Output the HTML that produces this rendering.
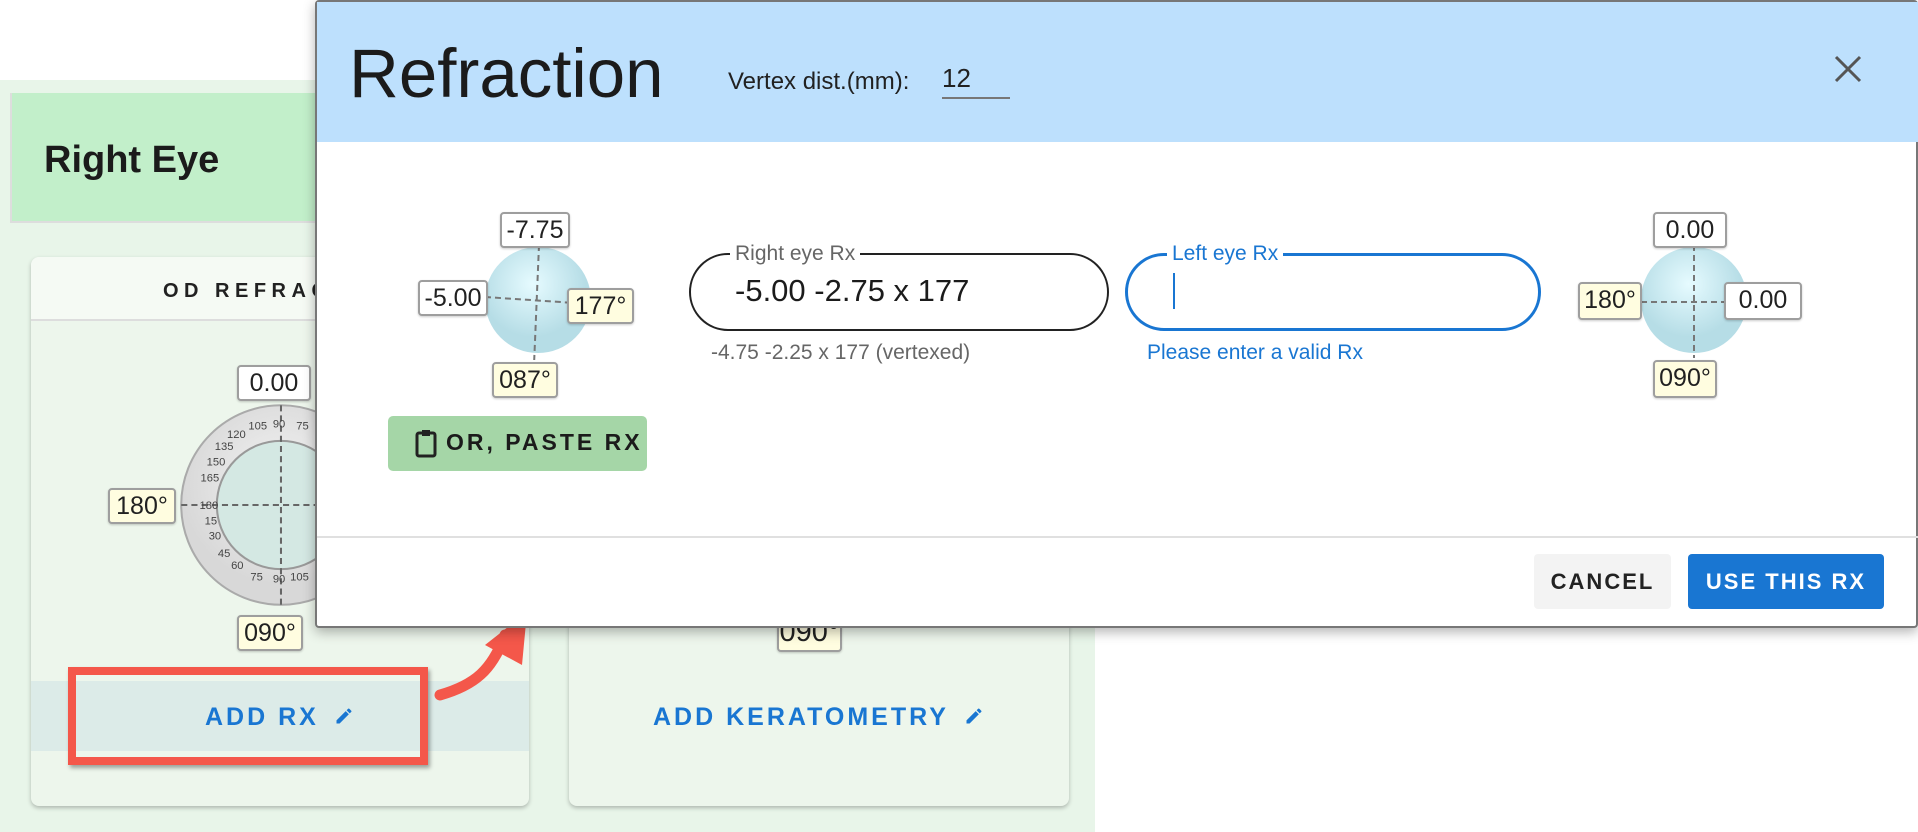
<!DOCTYPE html>
<html><head><meta charset="utf-8"><style>
*{box-sizing:border-box;margin:0;padding:0}
body{width:1918px;height:832px;position:relative;overflow:hidden;background:#fff;font-family:"Liberation Sans",sans-serif;color:#212121}
.a{position:absolute}
.lbl{position:absolute;border:2px solid #9e9e9e;border-radius:4px;background:#fff;font-size:25px;line-height:32px;text-align:center;color:#212121;box-shadow:0 1px 2px rgba(0,0,0,.2)}
.y{background:#fffde0}
.blue{color:#1976d2}
</style></head><body>
<div class="a" style="left:0;top:80px;width:1095px;height:752px;background:#e8f5e9"></div>
<div class="a" style="left:10px;top:93px;width:320px;height:130px;background:#c2efca;border-left:2px solid #ddd;border-bottom:2px solid #ddd"></div>
<div class="a" style="left:44px;top:139px;font-size:38px;font-weight:bold;color:#1b1b1b">Right Eye</div>

<div class="a" style="left:31px;top:257px;width:498px;height:549px;background:#edf6ec;border-radius:8px;box-shadow:0 2px 4px rgba(0,0,0,.25)"></div>
<div class="a" style="left:31px;top:257px;width:498px;height:64px;background:#f5faf4;border-bottom:2px solid #ddd;border-radius:8px 8px 0 0"></div>
<div class="a" style="left:163px;top:280px;font-size:20px;font-weight:bold;letter-spacing:5.5px">OD REFRACTION</div>
<div class="a" style="left:31px;top:681px;width:498px;height:70px;background:#dcebe8"></div>

<svg class="a" style="left:170px;top:393px" width="224" height="224" viewBox="0 0 220 220">
<defs><radialGradient id="rg" cx="50%" cy="40%"><stop offset="0" stop-color="#f4f4f4"/><stop offset="1" stop-color="#d8d8d8"/></radialGradient></defs>
<circle cx="109" cy="110" r="98" fill="url(#rg)" stroke="#aaa" stroke-width="2"/>
<circle cx="109" cy="110" r="63" fill="#d4e8e3" stroke="#999" stroke-width="2"/>
<g stroke="#666" stroke-width="2" stroke-dasharray="6 4"><line x1="11" y1="110" x2="207" y2="110"/><line x1="109" y1="12" x2="109" y2="208"/></g>
<g font-size="11" fill="#444" font-family="Liberation Sans">
<text x="101" y="34">90</text><text x="77" y="36">105</text><text x="56" y="44">120</text><text x="44" y="56">135</text><text x="36" y="71">150</text><text x="30" y="87">165</text><text x="29" y="114">180</text><text x="34" y="129">15</text><text x="38" y="144">30</text><text x="47" y="161">45</text><text x="60" y="173">60</text><text x="79" y="184">75</text><text x="101" y="186">90</text><text x="118" y="184">105</text><text x="124" y="36">75</text></g>
</svg>
<div class="lbl" style="left:237px;top:365px;width:74px;height:36px">0.00</div>
<div class="lbl y" style="left:108px;top:488px;width:68px;height:36px">180°</div>
<div class="lbl y" style="left:237px;top:615px;width:66px;height:36px">090°</div>

<div class="a" style="left:569px;top:540px;width:500px;height:266px;background:#edf6ec;border-radius:8px;box-shadow:0 2px 4px rgba(0,0,0,.25)"></div>
<div class="lbl y" style="left:777px;top:612px;width:65px;height:40px;font-size:29px;line-height:36px">090°</div>
<div class="a blue" style="left:653px;top:703px;font-size:25px;font-weight:bold;letter-spacing:3px">ADD KERATOMETRY</div>
<svg class="a" style="left:964px;top:706px" width="20" height="20" viewBox="0 0 24 24"><path fill="#1976d2" d="M3 17.25V21h3.75L17.81 9.94l-3.75-3.75L3 17.25zM20.71 7.04a1 1 0 000-1.41l-2.34-2.34a1 1 0 00-1.41 0l-1.83 1.83 3.75 3.75 1.83-1.83z"/></svg>

<div class="a blue" style="left:205px;top:703px;font-size:25px;font-weight:bold;letter-spacing:3px">ADD RX</div>
<svg class="a" style="left:334px;top:706px" width="20" height="20" viewBox="0 0 24 24"><path fill="#1976d2" d="M3 17.25V21h3.75L17.81 9.94l-3.75-3.75L3 17.25zM20.71 7.04a1 1 0 000-1.41l-2.34-2.34a1 1 0 00-1.41 0l-1.83 1.83 3.75 3.75 1.83-1.83z"/></svg>
<div class="a" style="left:68px;top:667px;width:360px;height:98px;border:8px solid #f4574a;box-shadow:2px 3px 4px rgba(0,0,0,.35)"></div>
<svg class="a" style="left:430px;top:600px" width="110" height="110" viewBox="0 0 110 110"><path d="M10 95 C45 85 62 70 75 35" fill="none" stroke="#f4574a" stroke-width="11" stroke-linecap="round"/><path d="M55 45 L97 12 L92 65 Z" fill="#f4574a"/></svg>

<div class="a" style="left:315px;top:0;width:1603px;height:628px;background:#fff;border:2px solid #777;border-radius:4px;box-shadow:0 4px 12px rgba(0,0,0,.3)"></div>
<div class="a" style="left:317px;top:2px;width:1601px;height:140px;background:#bde0fd"></div>
<div class="a" style="left:349px;top:34px;font-size:69px;color:#1b1b1b">Refraction</div>
<div class="a" style="left:728px;top:68px;font-size:24px">Vertex dist.(mm):</div>
<div class="a" style="left:942px;top:63px;font-size:26px">12</div>
<div class="a" style="left:942px;top:97px;width:68px;height:2px;background:#777"></div>
<svg class="a" style="left:1833px;top:54px" width="30" height="30" viewBox="0 0 30 30"><path d="M3 3L27 27M27 3L3 27" stroke="#555" stroke-width="3"/></svg>

<svg class="a" style="left:480px;top:240px" width="120" height="120"><defs><radialGradient id="lg" cx="45%" cy="35%"><stop offset="0" stop-color="#e6fbff"/><stop offset="1" stop-color="#b6dde6"/></radialGradient></defs><circle cx="58" cy="60" r="53" fill="url(#lg)"/><g stroke="#777" stroke-width="2" stroke-dasharray="6 4"><line x1="59" y1="5" x2="54" y2="125"/><line x1="5" y1="57" x2="110" y2="64"/></g></svg>
<div class="lbl" style="left:500px;top:212px;width:70px;height:36px">-7.75</div>
<div class="lbl" style="left:418px;top:280px;width:70px;height:36px">-5.00</div>
<div class="lbl y" style="left:567px;top:288px;width:67px;height:36px">177°</div>
<div class="lbl y" style="left:492px;top:362px;width:66px;height:36px">087°</div>

<div class="a" style="left:388px;top:416px;width:259px;height:55px;background:#a5d6a7;border-radius:5px"></div>
<svg class="a" style="left:414px;top:428px" width="24" height="30" viewBox="0 0 24 30"><rect x="3" y="5" width="18" height="23" rx="2" fill="none" stroke="#222" stroke-width="3"/><rect x="8" y="2" width="8" height="6" fill="#222"/></svg>
<div class="a" style="left:446px;top:429px;font-size:23px;font-weight:bold;letter-spacing:3px;color:#1b1b1b">OR, PASTE RX</div>

<div class="a" style="left:689px;top:253px;width:420px;height:78px;border:2px solid #222;border-radius:39px"></div>
<div class="a" style="left:730px;top:242px;background:#fff;padding:0 5px;font-size:21px;color:#666">Right eye Rx</div>
<div class="a" style="left:735px;top:273px;font-size:31px;color:#1b1b1b">-5.00 -2.75 x 177</div>
<div class="a" style="left:711px;top:341px;font-size:21px;color:#666">-4.75 -2.25 x 177 (vertexed)</div>

<div class="a" style="left:1125px;top:253px;width:416px;height:78px;border:3px solid #1976d2;border-radius:39px"></div>
<div class="a blue" style="left:1167px;top:242px;background:#fff;padding:0 5px;font-size:21px">Left eye Rx</div>
<div class="a" style="left:1173px;top:273px;width:2px;height:36px;background:#1976d2"></div>
<div class="a blue" style="left:1147px;top:341px;font-size:21px">Please enter a valid Rx</div>

<svg class="a" style="left:1636px;top:240px" width="120" height="120"><circle cx="58" cy="60" r="53" fill="url(#lg)"/><g stroke="#777" stroke-width="2" stroke-dasharray="6 4"><line x1="58" y1="5" x2="58" y2="118"/><line x1="5" y1="62" x2="110" y2="62"/></g></svg>
<div class="lbl" style="left:1653px;top:212px;width:74px;height:36px">0.00</div>
<div class="lbl y" style="left:1578px;top:282px;width:64px;height:38px">180°</div>
<div class="lbl" style="left:1724px;top:282px;width:78px;height:38px">0.00</div>
<div class="lbl y" style="left:1653px;top:360px;width:64px;height:38px">090°</div>

<div class="a" style="left:317px;top:536px;width:1601px;height:2px;background:#e0e0e0"></div>
<div class="a" style="left:1534px;top:554px;width:137px;height:55px;background:#f3f3f3;border-radius:4px;font-size:22px;font-weight:bold;letter-spacing:2px;line-height:55px;text-align:center;color:#222">CANCEL</div>
<div class="a" style="left:1688px;top:554px;width:196px;height:55px;background:#1976d2;border-radius:4px;font-size:22px;font-weight:bold;letter-spacing:2px;line-height:55px;text-align:center;color:#fff">USE THIS RX</div>
</body></html>
